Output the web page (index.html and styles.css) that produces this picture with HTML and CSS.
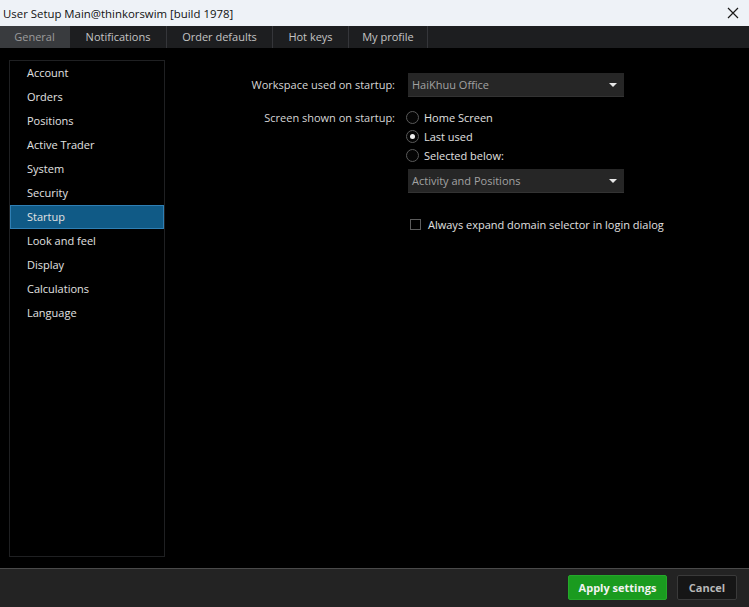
FILE: index.html
```html
<!DOCTYPE html>
<html lang="en">
<head>
    <meta charset="UTF-8">
    <meta name="viewport" content="width=device-width, initial-scale=1.0">
    <title>User Setup</title>
    <link rel="stylesheet" href="styles.css">
</head>
<body>
    <div class="window">
        <!-- Title bar -->
        <div class="titlebar">
            <span class="title">User Setup Main@thinkorswim [build 1978]</span>
            <svg class="close" width="12" height="12" viewBox="0 0 12 12">
                <path d="M1 1 L11 11 M11 1 L1 11" stroke="#1a1a1a" stroke-width="1.2" fill="none"/>
            </svg>
        </div>

        <!-- Tabs -->
        <div class="tabs">
            <div class="tab active">General</div>
            <div class="tab">Notifications</div>
            <div class="tab">Order defaults</div>
            <div class="tab">Hot keys</div>
            <div class="tab">My profile</div>
        </div>

        <div class="main">
            <ul class="side-list">
                <li>Account</li>
                <li>Orders</li>
                <li>Positions</li>
                <li>Active Trader</li>
                <li>System</li>
                <li>Security</li>
                <li class="selected">Startup</li>
                <li>Look and feel</li>
                <li>Display</li>
                <li>Calculations</li>
                <li>Language</li>
            </ul>

            <div class="form">
                <div class="label row1">Workspace used on startup:</div>
                <div class="select">
                    <span>HaiKhuu Office</span>
                    <span class="arrow"></span>
                </div>

                <div class="label row2">Screen shown on startup:</div>
                <div class="radios">
                    <div class="radio"><span class="dot"></span>Home Screen</div>
                    <div class="radio"><span class="dot checked"></span>Last used</div>
                    <div class="radio"><span class="dot"></span>Selected below:</div>
                    <div class="select select-2">
                        <span>Activity and Positions</span>
                        <span class="arrow"></span>
                    </div>
                </div>

                <div></div>
                <div class="check-row">
                    <span class="checkbox"></span>Always expand domain selector in login dialog
                </div>
            </div>
        </div>

        <!-- Footer -->
        <div class="footer">
            <button class="btn apply">Apply settings</button>
            <button class="btn cancel">Cancel</button>
        </div>
    </div>
</body>
</html>
```

FILE: styles.css
```css
/* Global */
body {
    margin: 0;
    font-family: 'Open Sans', 'Noto Sans', sans-serif;
    background: #000;
    color: #d8d8d8;
}

.window {
    width: 749px;
    height: 607px;
    display: flex;
    flex-direction: column;
    overflow: hidden;
}

/* Title bar */
.titlebar {
    height: 26px;
    flex: none;
    background: #eef2f7;
    display: flex;
    align-items: center;
    justify-content: space-between;
    padding: 0 10px 0 3px;
}

.title {
    color: #111;
    font-family: 'Open Sans', sans-serif;
    font-size: 11.4px;
}

/* Tabs */
.tabs {
    height: 22px;
    flex: none;
    display: flex;
    background: #1d1e20;
}

.tab {
    font-size: 11px;
    color: #c4c4c4;
    line-height: 22px;
    text-align: center;
    border-right: 1px solid #35363a;
}

.tab:nth-child(1) { width: 69px; }
.tab:nth-child(2) { width: 96px; }
.tab:nth-child(3) { width: 105px; }
.tab:nth-child(4) { width: 75px; }
.tab:nth-child(5) { width: 78px; }

.tab.active {
    background: #393b3e;
    color: #9c9c9c;
    border-right-color: #393b3e;
}

/* Main */
.main {
    flex: 1;
    display: flex;
    padding: 12px 0 11px 9px;
    background: #000;
}

.side-list {
    list-style: none;
    margin: 0;
    padding: 0;
    width: 154px;
    border: 1px solid #1f2022;
}

.side-list li {
    height: 24px;
    line-height: 24px;
    font-size: 11px;
    color: #e2e2e2;
    padding-left: 17px;
    box-sizing: border-box;
}

.side-list li.selected {
    background: #105a86;
    border: 1px solid #2f7fb4;
    line-height: 22px;
    padding-left: 16px;
}

/* Form */
.form {
    display: grid;
    grid-template-columns: 230px 216px;
    column-gap: 13px;
    row-gap: 11px;
    align-content: start;
    margin-top: 13px;
}

.label {
    font-size: 11px;
    color: #d6d6d6;
    text-align: right;
}

.label.row1 {
    line-height: 24px;
}

.label.row2 {
    line-height: 19px;
}

.select {
    height: 24px;
    background: #262626;
    border-bottom: 1px solid #333;
    box-sizing: border-box;
    display: flex;
    align-items: center;
    justify-content: space-between;
    padding: 0 7px 0 4px;
    font-size: 11px;
    color: #a2a2a2;
}

.select-2 {
    margin-top: 4px;
}

.arrow {
    width: 0;
    height: 0;
    border-left: 4px solid transparent;
    border-right: 4px solid transparent;
    border-top: 4px solid #e8e8e8;
}

.radios {
    display: flex;
    flex-direction: column;
}

.radio {
    height: 19px;
    display: flex;
    align-items: center;
    font-size: 11px;
    color: #e0e0e0;
    margin-left: -2px;
}

.dot {
    flex: none;
    width: 11px;
    height: 11px;
    border: 1px solid #5a5a5a;
    border-radius: 50%;
    margin-right: 5px;
    position: relative;
    background: #050505;
}

.dot.checked::after {
    content: '';
    position: absolute;
    left: 3px;
    top: 3px;
    width: 5px;
    height: 5px;
    border-radius: 50%;
    background: #f0f0f0;
}

.check-row {
    margin-top: 13px;
    display: flex;
    align-items: center;
    font-size: 11px;
    color: #e0e0e0;
    white-space: nowrap;
}

.checkbox {
    flex: none;
    width: 9px;
    height: 9px;
    border: 1px solid #5c5c5c;
    margin: 0 7px 0 2px;
}

/* Footer */
.footer {
    height: 39px;
    flex: none;
    box-sizing: border-box;
    background: #232323;
    border-top: 1px solid #4a4a4a;
    display: flex;
    justify-content: flex-end;
    align-items: center;
    gap: 10px;
    padding: 0 12px 2px 0;
}

.btn {
    height: 25px;
    font-family: 'Open Sans', sans-serif;
    font-size: 11px;
    font-weight: bold;
    border-radius: 2px;
    cursor: pointer;
}

.btn.apply {
    width: 99px;
    background: #1a9b1f;
    color: #f2f2f2;
    border: 1px solid #24a82a;
}

.btn.cancel {
    width: 60px;
    background: #161616;
    color: #b8b8b8;
    border: 1px solid #3a3a3a;
}
```
